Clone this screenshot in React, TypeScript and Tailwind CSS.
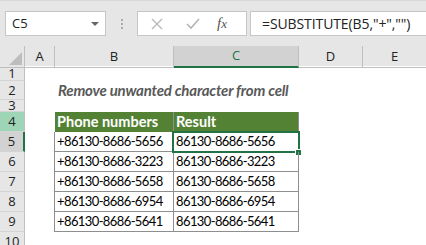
import React from "react";

const phones = [
  "+86130-8686-5656",
  "+86130-8686-3223",
  "+86130-8686-5658",
  "+86130-8686-6954",
  "+86130-8686-5641",
];

const UI_FONT = "font-['Open_Sans',_'Liberation_Sans',_sans-serif]";
const CELL_FONT = "font-['Lato',_'Liberation_Sans',_sans-serif]";

// column widths: row header, A, B, C, D, E
const COLS = "grid grid-cols-[25px_30px_119px_125px_64px_63px]";

function RowHead({ n, h, kind }: { n: number; h: string; kind?: "hover" | "active" }) {
  const bg =
    kind === "hover"
      ? "bg-[#9fd5b7]"
      : kind === "active"
        ? "bg-[#d2d2d2] border-r-2 border-r-[#217346]"
        : "bg-[#e6e6e6]";
  return (
    <div
      className={`${h} ${bg} flex items-center justify-center overflow-hidden border-b border-[#d4d4d4] ${
        kind === "active" ? "" : "border-r border-r-[#bfbfbf]"
      } text-[13px] leading-none text-[#222]`}
    >
      {n}
    </div>
  );
}

function Blank() {
  return <div />;
}

export default function App() {
  return (
    <div className={`w-[426px] h-[245px] overflow-hidden bg-white ${UI_FONT}`}>
      {/* formula bar */}
      <div className="h-[46px] bg-[#e6e6e6] border-t border-[#d8d8d8] flex items-start pt-[10px] pl-[5px]">
        <div className="w-[101px] h-[25px] bg-white border border-[#c6c6c6] flex items-center justify-between pl-[6px] pr-[6px]">
          <span className="text-[13px] text-[#222]">C5</span>
          <span className="w-0 h-0 border-l-[4px] border-r-[4px] border-t-[4px] border-l-transparent border-r-transparent border-t-[#666]" />
        </div>
        <div className="w-[31px] h-[25px] flex flex-col items-center justify-center gap-[2px]">
          <span className="w-[2px] h-[2px] bg-[#aaa]" />
          <span className="w-[2px] h-[2px] bg-[#aaa]" />
          <span className="w-[2px] h-[2px] bg-[#aaa]" />
        </div>
        <div className="w-[110px] h-[25px] bg-white border border-[#c6c6c6] flex items-center">
          <svg width="12" height="12" viewBox="0 0 12 12" className="ml-[13px]">
            <path d="M1 1 L11 11 M11 1 L1 11" stroke="#b5b5b5" strokeWidth="1.2" fill="none" />
          </svg>
          <svg width="14" height="12" viewBox="0 0 14 12" className="ml-[23px]">
            <path d="M1 6 L5 10 L13 1" stroke="#b5b5b5" strokeWidth="1.6" fill="none" />
          </svg>
          <span className="ml-[17px] font-['Liberation_Serif',_serif] italic text-[15px] text-[#555] leading-none">
            f<span className="text-[13px]">x</span>
          </span>
        </div>
        <div className="ml-[3px] flex-1 h-[25px] bg-white border border-[#c6c6c6] border-r-0 flex items-center pl-[11px]">
          <span className="text-[14px] text-[#222] tracking-[-0.1px]">=SUBSTITUTE(B5,"+","")</span>
        </div>
      </div>

      {/* column headers */}
      <div className={`${COLS} h-[20px] bg-[#e6e6e6] text-[13px] text-[#222]`}>
        <div className="relative border-r border-[#bfbfbf] border-b border-b-[#bfbfbf]">
          <svg width="13" height="13" viewBox="0 0 13 13" className="absolute right-[2px] bottom-[2px]">
            <path d="M13 0 L13 13 L0 13 Z" fill="#bdbdbd" />
          </svg>
        </div>
        <div className="flex items-center justify-center border-r border-[#bfbfbf] border-b border-b-[#bfbfbf]">A</div>
        <div className="flex items-center justify-center border-r border-[#bfbfbf] border-b border-b-[#bfbfbf]">B</div>
        <div className="flex items-center justify-center bg-[#d2d2d2] border-r border-[#bfbfbf] border-b-2 border-b-[#217346] text-[#217346]">C</div>
        <div className="flex items-center justify-center border-r border-[#bfbfbf] border-b border-b-[#bfbfbf]">D</div>
        <div className="flex items-center justify-center border-b border-b-[#bfbfbf]">E</div>
      </div>

      {/* row 1 */}
      <div className={COLS}>
        <RowHead n={1} h="h-[15px]" />
      </div>

      {/* row 2: title */}
      <div className={COLS}>
        <RowHead n={2} h="h-[19px]" />
        <Blank />
        <div className="col-span-4 flex items-end pl-[3px] pb-[2px] overflow-visible whitespace-nowrap">
          <span className={`${CELL_FONT} italic font-bold text-[15px] leading-none text-[#595959] tracking-[-0.2px]`}>
            Remove unwanted character from cell
          </span>
        </div>
      </div>

      {/* row 3 */}
      <div className={COLS}>
        <RowHead n={3} h="h-[12px]" />
      </div>

      {/* row 4: table header */}
      <div className={COLS}>
        <RowHead n={4} h="h-[20px]" kind="hover" />
        <Blank />
        <div className={`bg-[#548235] border-r border-[#8e8e8e] flex items-end pl-[2px] pb-[3px] ${CELL_FONT} font-bold text-[14.5px] leading-none text-white`}>
          Phone numbers
        </div>
        <div className={`bg-[#548235] border-r border-[#8e8e8e] flex items-end pl-[2px] pb-[3px] ${CELL_FONT} font-bold text-[14.5px] leading-none text-white`}>
          Result
        </div>
      </div>

      {/* data rows */}
      {phones.map((p, i) => (
        <div key={p} className={COLS}>
          <RowHead n={5 + i} h="h-[20px]" kind={i === 0 ? "active" : undefined} />
          <Blank />
          <div className={`border-l border-r border-b border-[#8e8e8e] -ml-px flex items-end pl-[2px] pb-[3px] ${CELL_FONT} text-[13px] leading-none text-black tracking-[-0.6px]`}>
            {p}
          </div>
          <div className={`relative border-r border-b border-[#8e8e8e] flex items-end pl-[2px] pb-[3px] ${CELL_FONT} text-[13px] leading-none text-black tracking-[-0.6px]`}>
            {p.slice(1)}
            {i === 0 && (
              <>
                <span className="absolute -left-[2px] -top-[1px] -right-[2px] -bottom-[2px] border-2 border-[#217346] pointer-events-none" />
                <span className="absolute -right-[4px] -bottom-[5px] w-[7px] h-[7px] bg-[#217346] border border-white" />
              </>
            )}
          </div>
        </div>
      ))}

      {/* row 10 */}
      <div className={COLS}>
        <RowHead n={10} h="h-[20px]" />
      </div>
    </div>
  );
}
